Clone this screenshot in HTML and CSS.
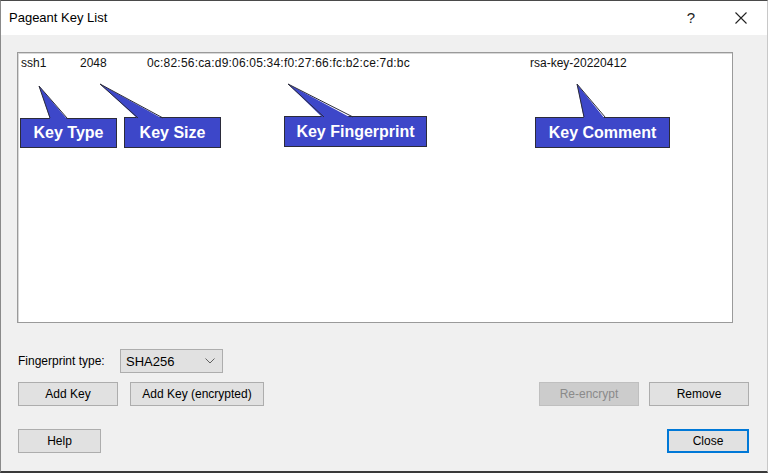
FILE: index.html
```html
<!DOCTYPE html>
<html>
<head>
<meta charset="utf-8">
<title>Pageant Key List</title>
<link rel="stylesheet" href="styles.css">
</head>
<body>
<div class="window">
  <div class="titlebar">
    <span class="title">Pageant Key List</span>
    <span class="help-glyph">?</span>
    <svg class="close-x" width="12" height="12" viewBox="0 0 12 12"><path d="M0.5 0.5 L11.5 11.5 M11.5 0.5 L0.5 11.5" stroke="#222" stroke-width="1.1" fill="none"/></svg>
  </div>
  <div class="content">
    <div class="listbox">
      <div class="row">
        <span>ssh1</span>
        <span>2048</span>
        <span class="fp-text">0c:82:56:ca:d9:06:05:34:f0:27:66:fc:b2:ce:7d:bc</span>
        <span>rsa-key-20220412</span>
      </div>
      <div class="callout c-type">Key Type</div>
      <div class="callout c-size">Key Size</div>
      <div class="callout c-fp">Key Fingerprint</div>
      <div class="callout c-comment">Key Comment</div>
      <svg class="pointers" width="714" height="80" viewBox="0 0 714 80">
        <g fill="#3d47c9" stroke="none">
          <polygon points="21,33 49,66 32,66"/>
          <polygon points="82,31 145,66 120,66"/>
          <polygon points="270,31 335,66 306,66"/>
          <polygon points="559,31 587,66 566,66"/>
        </g>
        <g fill="none" stroke="#2b2b3a" stroke-width="1">
          <polyline points="32,65 21,33 49,65"/>
          <polyline points="120,65 82,31 145,65"/>
          <polyline points="306,64 270,31 335,64"/>
          <polyline points="566,64 559,31 587,64"/>
        </g>
      </svg>
    </div>
    <div class="fp-row">
      <span class="fp-label">Fingerprint type:</span>
      <div class="combo">
        <span>SHA256</span>
        <svg width="10" height="6" viewBox="0 0 10 6"><path d="M0.5 0.5 L5 5 L9.5 0.5" stroke="#606060" stroke-width="1" fill="none"/></svg>
      </div>
    </div>
    <div class="btn-row">
      <div class="group">
        <button class="btn w100">Add Key</button>
        <button class="btn w134">Add Key (encrypted)</button>
      </div>
      <div class="group">
        <button class="btn w100 disabled">Re-encrypt</button>
        <button class="btn w100">Remove</button>
      </div>
    </div>
    <div class="btn-row last">
      <button class="btn w83">Help</button>
      <button class="btn w82 default">Close</button>
    </div>
  </div>
</div>
</body>
</html>
```
FILE: styles.css
```css
html, body {
  margin: 0;
  padding: 0;
  width: 768px;
  height: 473px;
  overflow: hidden;
  background: #f0f0f0;
  font-family: "Liberation Sans", Arial, sans-serif;
  font-size: 12px;
  color: #000;
}

.window {
  box-sizing: border-box;
  width: 768px;
  height: 473px;
  border-top: 1px solid #4a4a4a;
  border-left: 1px solid #8a8a8a;
  border-right: 1px solid #c8c8c8;
  border-bottom: 2px solid #3a3a3a;
  background: #f0f0f0;
  display: flex;
  flex-direction: column;
}

.titlebar {
  height: 34px;
  background: #ffffff;
  display: flex;
  align-items: center;
  padding-left: 8px;
  flex-shrink: 0;
}

.title {
  font-size: 13px;
  color: #000;
  flex: 1;
  padding-bottom: 1px;
}

.help-glyph {
  font-size: 15px;
  color: #222;
  margin-right: 40px;
  padding-bottom: 2px;
}

.close-x {
  margin-right: 20px;
}

.content {
  padding: 17px 0 0 16px;
  width: 732px;
}

.listbox {
  position: relative;
  box-sizing: border-box;
  width: 716px;
  height: 271px;
  background: #ffffff;
  border: 1px solid #9a9a9a;
  box-shadow: inset 1px 1px 0 #d8d8d8;
  padding: 3px 0 0 3px;
}

.row {
  display: grid;
  grid-template-columns: 59px 67px 383px auto;
  line-height: 15px;
  color: #111;
}

.fp-text {
  letter-spacing: 0.2px;
}

.callout {
  position: absolute;
  box-sizing: border-box;
  background: #3d47c9;
  border: 1px solid #2b2b3a;
  color: #ffffff;
  font-weight: bold;
  font-size: 16px;
  display: flex;
  align-items: center;
  justify-content: center;
  top: 64px;
  height: 31px;
}

.c-type { left: 2px; width: 97px; top: 65px; height: 30px; }
.c-size { left: 106px; width: 97px; top: 64px; }
.c-fp { left: 266px; width: 143px; top: 63px; }
.c-comment { left: 517px; width: 135px; }

.pointers {
  position: absolute;
  left: 0;
  top: 0;
  pointer-events: none;
}

.fp-row {
  display: flex;
  align-items: center;
  margin-top: 26px;
  height: 24px;
}

.fp-label {
  width: 102px;
  padding-left: 1px;
}

.combo {
  box-sizing: border-box;
  width: 103px;
  height: 24px;
  background: #e1e1e1;
  border: 1px solid #adadad;
  display: flex;
  align-items: center;
  justify-content: space-between;
  padding: 0 7px 0 5px;
  font-size: 13px;
}

.btn-row {
  display: flex;
  justify-content: space-between;
  margin-top: 9px;
  padding-left: 1px;
}

.btn-row.last {
  margin-top: 23px;
}

.group {
  display: flex;
  gap: 12px;
}

.group + .group {
  gap: 10px;
}

.btn {
  box-sizing: border-box;
  height: 24px;
  background: #e1e1e1;
  border: 1px solid #adadad;
  font-family: "Liberation Sans", Arial, sans-serif;
  font-size: 12px;
  color: #000;
  padding: 0;
  margin: 0;
}

.w100 { width: 100px; }
.w134 { width: 134px; }
.w83 { width: 83px; }
.w82 { width: 82px; }

.btn.disabled {
  background: #cccccc;
  border-color: #bfbfbf;
  color: #8a8a8a;
}

.btn.default {
  border: 2px solid #0078d7;
}
```
